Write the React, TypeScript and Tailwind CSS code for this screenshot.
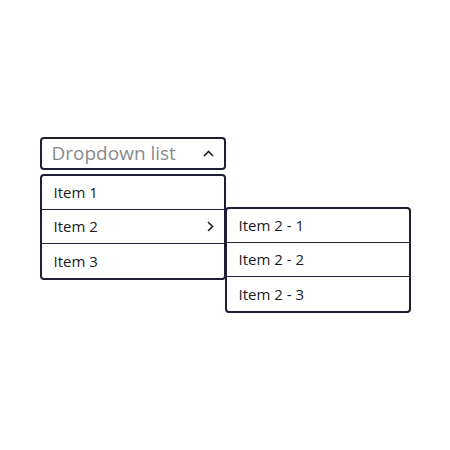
import { ReactNode } from 'react';

const items = ['Item 1', 'Item 2', 'Item 3'];
const subItems = ['Item 2 - 1', 'Item 2 - 2', 'Item 2 - 3'];

function Row({ children, last }: { children: ReactNode; last?: boolean }) {
  return (
    <div
      className={`flex h-[34px] items-center justify-between pl-[12px] pr-[10px] text-[15px] text-[#1b1b1f] ${
        last ? '' : 'border-b-[1.5px] border-[#23233a]'
      }`}
    >
      {children}
    </div>
  );
}

export default function App() {
  return (
    <div
      className="flex h-[450px] w-[450px] items-center justify-center bg-white"
      style={{ fontFamily: '"Open Sans", "Noto Sans", sans-serif' }}
    >
      <div className="flex items-start">
        {/* Main dropdown */}
        <div className="flex w-[186px] flex-col gap-[4px]">
          <div className="flex h-[33px] items-center justify-between rounded-[4px] border-2 border-[#1f1f33] pl-[10px] pr-[10px]">
            <span className="text-[19px] leading-none text-[#8a8a8a]">Dropdown list</span>
            <svg width="11" height="7" viewBox="0 0 11 7" fill="none">
              <path d="M1 6l4.5-4.5L10 6" stroke="#1f1f2a" strokeWidth="1.6" />
            </svg>
          </div>
          <div className="flex flex-col rounded-[4px] border-2 border-[#1f1f33]">
            {items.map((label, i) => (
              <Row key={label} last={i === items.length - 1}>
                <span>{label}</span>
                {i === 1 && (
                  <svg width="7" height="11" viewBox="0 0 7 11" fill="none">
                    <path d="M1 1l4.5 4.5L1 10" stroke="#1f1f2a" strokeWidth="1.6" />
                  </svg>
                )}
              </Row>
            ))}
          </div>
        </div>

        {/* Submenu for Item 2 */}
        <div className="-ml-px mt-[70px] flex w-[186px] flex-col rounded-[4px] border-2 border-[#1f1f33]">
          {subItems.map((label, i) => (
            <Row key={label} last={i === subItems.length - 1}>
              <span>{label}</span>
            </Row>
          ))}
        </div>
      </div>
    </div>
  );
}
